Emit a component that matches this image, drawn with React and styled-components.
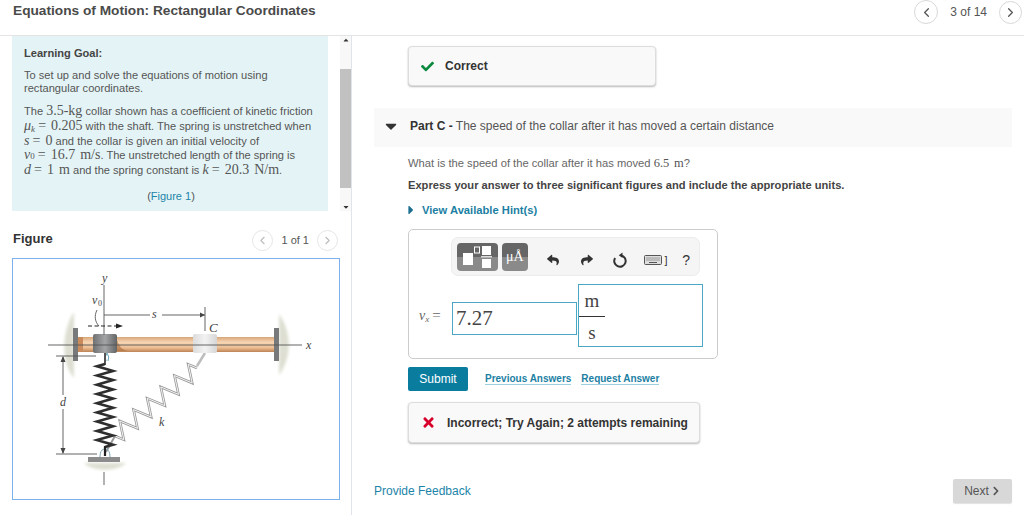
import styled, { createGlobalStyle } from "styled-components";
import { FaCheck, FaTimes, FaReply, FaShare, FaChevronRight, FaCaretDown, FaCaretRight, FaCaretUp } from "react-icons/fa";
import { ChevronLeft, ChevronRight } from "lucide-react";

const GlobalStyle = createGlobalStyle`
  html, body {
    margin: 0;
    padding: 0;
    background: #fff;
    font-family: "Liberation Sans", Arial, sans-serif;
    color: #555;
  }
`;

const Page = styled.div`
  width: 1024px;
  height: 515px;
  overflow: hidden;
  display: flex;
  flex-direction: column;
`;

const Header = styled.header`
  height: 35px;
  border-bottom: 1px solid #e4e4e4;
  display: flex;
  justify-content: space-between;
  padding: 0 2px 0 13px;
`;

const Title = styled.h1`
  margin: 3px 0 0;
  font-size: 13.7px;
  line-height: 16px;
  font-weight: 700;
  color: #4a4a4a;
`;

const Pager = styled.div`
  display: flex;
  align-items: center;
  gap: ${(p) => p.$gap}px;
  height: ${(p) => p.$height}px;
  font-size: ${(p) => p.$size}px;
  color: #555;
`;

const Round = styled.span`
  width: ${(p) => p.$d}px;
  height: ${(p) => p.$d}px;
  box-sizing: border-box;
  border: 1px solid ${(p) => p.$line};
  border-radius: 50%;
  display: flex;
  align-items: center;
  justify-content: center;
  color: ${(p) => p.$color};
`;

const Main = styled.div`
  flex: 1;
  display: flex;
  min-height: 0;
`;

const LeftPane = styled.aside`
  width: 351px;
  border-right: 1px solid #dfe5ea;
  display: flex;
  flex-direction: column;
`;

const GoalRow = styled.div`
  display: flex;
  height: 175px;
  padding-left: 12px;
  gap: 12px;
`;

const GoalBox = styled.div`
  width: 304px;
  background: #e4f4f6;
  padding: 11px 0 0 12px;
  font-size: 11.1px;
  line-height: 13px;
  color: #555;
`;

const GoalHead = styled.div`
  font-weight: 700;
  color: #444;
  margin-bottom: 9px;
`;

const GoalText = styled.p`
  margin: 0 0 9px;
`;

const ProblemText = styled.div`
  margin: 0;
`;

const ProblemLine = styled.div`
  height: 14.8px;
  line-height: 14.8px;
  white-space: nowrap;
`;

const FigureLink = styled.div`
  margin-top: 12px;
  margin-right: 10px;
  text-align: center;
  font-size: 11px;
  color: #555;

  span {
    color: #1c84a8;
  }
`;

const M = styled.span`
  font-family: "Liberation Serif", "Times New Roman", serif;
  font-size: ${(p) => p.$size || 14}px;
  color: #555;
  word-spacing: 1.5px;
  font-style: ${(p) => (p.$italic ? "italic" : "normal")};

  sub {
    font-size: 9px;
    line-height: 0;
    vertical-align: -2px;
  }
`;

const Scrollbar = styled.div`
  width: 11px;
  background: #f8f8f8;
  display: flex;
  flex-direction: column;
  justify-content: space-between;
  align-items: center;
  color: #333;
  font-size: 8px;
`;

const Thumb = styled.div`
  width: 100%;
  height: 119px;
  background: #c1c1c1;
  margin: 5px 0 -5px;
`;

const FigureHead = styled.div`
  height: 47px;
  display: flex;
  align-items: center;
  justify-content: space-between;
  padding: 11px 13px 0 13px;
  box-sizing: border-box;
`;

const FigureTitle = styled.h2`
  margin: 0 0 4px;
  font-size: 13px;
  font-weight: 700;
  color: #333;
`;

const FigureFrame = styled.div`
  margin-left: 12px;
  width: 326px;
  height: 240px;
  border: 1px solid #7fb0ee;
  line-height: 0;
`;

const RightPane = styled.main`
  flex: 1;
  display: flex;
  flex-direction: column;
  padding: 10px 12px 0 22px;
`;

const Feedback = styled.div`
  margin: ${(p) => p.$top}px 0 0 34px;
  width: ${(p) => p.$width}px;
  height: ${(p) => p.$height}px;
  box-sizing: border-box;
  border: 1px solid #ddd;
  border-radius: 4px;
  background: #f9f9f9;
  box-shadow: 0 1px 2px rgba(0, 0, 0, 0.28);
  display: flex;
  align-items: center;
  gap: ${(p) => p.$gap}px;
  padding-left: 12px;
  font-size: 12px;
  font-weight: 700;
  color: #333;
`;

const PartBar = styled.div`
  margin-top: 22px;
  height: 39px;
  box-sizing: border-box;
  background: #f9f9f9;
  display: flex;
  align-items: center;
  font-size: 12px;
  color: #555;
  padding: 0 0 3px 8px;
  gap: 10px;

  svg {
    color: #333;
  }

  b {
    color: #333;
  }
`;

const Question = styled.p`
  margin: 9px 0 0 34px;
  font-size: 11.2px;
  line-height: 14px;
  color: #666;
`;

const Instruction = styled.p`
  margin: 8px 0 0 34px;
  font-size: 11.14px;
  line-height: 14px;
  font-weight: 700;
  color: #444;
`;

const Hint = styled.div`
  margin: 12px 0 0 34px;
  display: flex;
  align-items: center;
  gap: 4px;
  font-size: 11.2px;
  line-height: 13px;
  font-weight: 700;
  color: #1c7fa3;

  svg {
    color: #1c6f90;
    margin: -2px 0 0 -4px;
  }
`;

const AnswerCard = styled.div`
  margin: 12px 0 0 34px;
  width: 310px;
  height: 130px;
  box-sizing: border-box;
  border: 1px solid #ccc;
  border-radius: 5px;
  padding: 7px 0 0 14px;
`;

const Toolbar = styled.div`
  width: 249px;
  height: 39px;
  margin-left: 28px;
  box-sizing: border-box;
  background: #f5f5f5;
  border: 1px solid #ececec;
  border-radius: 7px;
  display: flex;
  align-items: center;
  padding-left: 5px;
  color: #333;
`;

const ToolKey = styled.div`
  width: ${(p) => p.$w}px;
  height: 28px;
  margin-right: 4px;
  border-radius: 4px;
  background: linear-gradient(#666 0 50%, #8a8a8a 50% 100%);
  color: #fff;
  display: flex;
  align-items: center;
  justify-content: center;
  font-family: "Liberation Serif", serif;
  font-size: 14px;
`;

const ToolIcon = styled.span`
  width: ${(p) => p.$w}px;
  margin-top: 6px;
  display: flex;
  justify-content: center;
  align-items: center;
  gap: 2px;
  color: #333;
  font-size: 14px;

  small {
    font-size: 11px;
  }
`;

const AnswerRow = styled.div`
  margin-top: 8px;
  display: flex;
  align-items: flex-start;
  height: 63px;
`;

const Variable = styled.span`
  flex: 0 0 33px;
  margin: 23px 0 0 -4px;
  font-family: "Liberation Serif", serif;
  font-style: italic;
  font-size: 14px;
  line-height: 16px;
  color: #666;

  sub {
    font-size: 9px;
    line-height: 0;
    vertical-align: -2px;
  }

  em {
    font-style: normal;
    font-size: 15px;
    margin-left: 3px;
  }
`;

const ValueBox = styled.div`
  width: 125px;
  height: 33px;
  margin-top: 18px;
  box-sizing: border-box;
  border: 1px solid #4ba8c4;
  padding-left: 3px;
  font-family: "Liberation Serif", serif;
  font-size: 21px;
  line-height: 31px;
  color: #444;
`;

const UnitBox = styled.div`
  width: 125px;
  height: 63px;
  margin-left: 1px;
  box-sizing: border-box;
  border: 1px solid #4ba8c4;
  font-family: "Liberation Serif", serif;
  font-size: 19px;
  color: #444;
`;

const Fraction = styled.div`
  width: 26px;
  text-align: center;
  padding-top: 5px;
  line-height: 21px;

  div + div {
    border-top: 1px solid #333;
    margin-top: 5px;
    padding-top: 5px;
  }
`;

const Actions = styled.div`
  margin: 8px 0 0 34px;
  display: flex;
  align-items: center;
`;

const SubmitButton = styled.button`
  width: 60px;
  height: 24px;
  border: none;
  border-radius: 2px;
  background: #0a7d9f;
  color: #fff;
  font-family: inherit;
  font-size: 12px;
  padding: 0;
  margin-right: 17px;
`;

const TextLink = styled.a`
  font-size: 10px;
  font-weight: 700;
  color: #1c7fa3;
  margin-right: 10px;
  border-bottom: 1px solid #9cd0e0;
  line-height: 11px;
`;

const Footer = styled.footer`
  margin-top: auto;
  height: 36px;
  display: flex;
  justify-content: space-between;
  align-items: flex-start;
`;

const FeedbackLink = styled.a`
  font-size: 12px;
  line-height: 24px;
  color: #1c84a8;
`;

const NextButton = styled.div`
  width: 59px;
  height: 24px;
  background: #d8d8d8;
  border-radius: 2px;
  box-shadow: 0 1px 1px rgba(0, 0, 0, 0.12);
  display: flex;
  align-items: center;
  justify-content: center;
  gap: 2px;
  font-size: 12px;
  color: #555;
`;

// zigzag between two points, used for both springs
const coil = (x1, y1, x2, y2, turns, amp) => {
  const dx = x2 - x1;
  const dy = y2 - y1;
  const len = Math.hypot(dx, dy);
  const nx = -dy / len;
  const ny = dx / len;
  const pts = [[x1, y1]];
  for (let i = 0; i < turns * 2; i++) {
    const t = (i + 0.5) / (turns * 2);
    const side = i % 2 === 0 ? amp : -amp;
    pts.push([x1 + dx * t + nx * side, y1 + dy * t + ny * side]);
  }
  pts.push([x2, y2]);
  return pts.map((p) => p.map((n) => n.toFixed(1)).join(",")).join(" ");
};

function CollarDiagram() {
  const darkSpring = coil(105, 364, 105, 447, 9, 8);
  const lightSpring = coil(115, 436, 197, 368, 6, 8.5);
  const serif = { fontFamily: "Liberation Serif, serif", fontStyle: "italic", fill: "#444" };
  return (
    <svg width="326" height="240" viewBox="13 259 326 240">
      <defs>
        <linearGradient id="rod" x1="0" y1="0" x2="0" y2="1">
          <stop offset="0" stopColor="#d8a678" />
          <stop offset="0.35" stopColor="#f7d6b5" />
          <stop offset="0.7" stopColor="#eebf95" />
          <stop offset="1" stopColor="#bd8455" />
        </linearGradient>
        <linearGradient id="steel" x1="0" y1="0" x2="1" y2="0">
          <stop offset="0" stopColor="#6f7172" />
          <stop offset="0.5" stopColor="#a2a4a5" />
          <stop offset="1" stopColor="#626465" />
        </linearGradient>
        <linearGradient id="ghost" x1="0" y1="0" x2="1" y2="0">
          <stop offset="0" stopColor="#dcdcdc" />
          <stop offset="0.5" stopColor="#f2f2f2" />
          <stop offset="1" stopColor="#d6d6d6" />
        </linearGradient>
        <filter id="soft">
          <feGaussianBlur stdDeviation="0.45" />
        </filter>
        <filter id="softer">
          <feGaussianBlur stdDeviation="1.6" />
        </filter>
      </defs>
      <g filter="url(#softer)" fill="#dedfd2">
        <path d="M74 312 C62 330 60 362 74 378 Z" />
        <path d="M279 314 C292 332 292 358 279 375 Z" />
        <path d="M84 463 H126 C118 472 92 472 84 463 Z" />
      </g>
      <g filter="url(#soft)">
        <rect x="73" y="328" width="5" height="33" fill="#77797a" />
        <rect x="274" y="328" width="5" height="33" fill="#77797a" />
        <rect x="78" y="337" width="196" height="15" fill="url(#rod)" />
        <rect x="78" y="337" width="5" height="15" fill="#c98a5c" />
        <path d="M117 340 C119 346 122 350 128 351 H117 Z" fill="#a86c3e" opacity="0.6" />
        <path d="M107 353 q-3 4 -1 8 M107 353 q3 4 1 8" stroke="#6aa5b8" fill="none" />
        <path d="M205 353 L197 366" stroke="#bdbdbd" strokeWidth="2.5" fill="none" />
        <polyline points={lightSpring} fill="none" stroke="#9a9a9a" strokeWidth="2.6" />
        <polyline points={lightSpring} fill="none" stroke="#f4f4f4" strokeWidth="1" />
        <path d="M115 436 L106 452" stroke="#9a9a9a" strokeWidth="2" fill="none" />
        <line x1="105" y1="353" x2="105" y2="365" stroke="#555" strokeWidth="2" />
        <polyline points={darkSpring} fill="none" stroke="#2e2e2e" strokeWidth="2.6" />
        <line x1="105" y1="446" x2="105" y2="456" stroke="#222" strokeWidth="2.2" />
        <path d="M100 457 q0 -7 4 -8 M110 457 q0 -7 -4 -8" stroke="#7da5b5" fill="none" />
        <rect x="88" y="457" width="32" height="5" fill="#8c8c8c" />
        <rect x="93" y="334" width="24" height="19" rx="2" fill="url(#steel)" />
        <rect x="193" y="334" width="24" height="19" rx="2" fill="url(#ghost)" />
        <g stroke="#555" strokeWidth="0.9" fill="none">
          <line x1="48" y1="345" x2="302" y2="345" />
          <line x1="104" y1="285" x2="104" y2="335" />
          <line x1="104" y1="472" x2="104" y2="485" />
          <line x1="205" y1="307" x2="205" y2="331" />
          <line x1="104" y1="315" x2="150" y2="315" />
          <line x1="162" y1="315" x2="205" y2="315" />
          <line x1="56" y1="356" x2="96" y2="356" />
          <line x1="56" y1="454" x2="97" y2="454" />
          <line x1="63" y1="357" x2="63" y2="395" />
          <line x1="63" y1="409" x2="63" y2="453" />
          <path d="M97 310 C94 316 95 322 99 326" />
          <line x1="88" y1="326" x2="118" y2="326" stroke="#222" strokeWidth="1.2" strokeDasharray="4 2.5" />
        </g>
        <path d="M123 326 L116 323.5 V328.5 Z" fill="#222" />
        <path d="M205 315 L200 312.5 V317.5 Z" fill="#444" />
        <path d="M63 356 L60.5 362 H65.5 Z" fill="#444" />
        <path d="M63 454 L60.5 448 H65.5 Z" fill="#444" />
      </g>
      <g fontSize="12" style={serif}>
        <text x="102" y="282">y</text>
        <text x="92" y="304">v</text>
        <text x="98" y="306" fontSize="8" fontStyle="normal">0</text>
        <text x="152" y="318">s</text>
        <text x="209" y="332" fontSize="13">C</text>
        <text x="306" y="349">x</text>
        <text x="60" y="406">d</text>
        <text x="159" y="426">k</text>
      </g>
    </svg>
  );
}

function KeyboardIcon() {
  return (
    <svg width="18" height="10" viewBox="0 0 18 10">
      <rect x="0.5" y="0.5" width="17" height="9" rx="1" fill="#ddd" stroke="#555" />
      <path d="M2.5 3 H15.5 M2.5 5 H15.5" stroke="#555" strokeDasharray="1 1" />
      <path d="M5 7.5 H13" stroke="#555" />
    </svg>
  );
}

function ResetIcon() {
  return (
    <svg width="16" height="16" viewBox="0 0 16 16">
      <path d="M3.1 6 A5.7 5.7 0 1 0 9 3.4" fill="none" stroke="#333" strokeWidth="2" />
      <path d="M6.8 3.3 L10.5 0.5 V6 Z" fill="#333" />
    </svg>
  );
}

function TemplateGlyph() {
  return (
    <svg width="41" height="28" viewBox="0 0 41 28">
      <rect x="6" y="10" width="10" height="12" fill="#fff" />
      <rect x="17.5" y="4" width="5" height="6" fill="none" stroke="#fff" />
      <rect x="25" y="3" width="9" height="9" fill="#fff" />
      <rect x="24" y="13" width="11" height="1.5" fill="#ddd" />
      <rect x="25" y="16" width="9" height="9" fill="#fff" />
    </svg>
  );
}

export default function App() {
  return (
    <Page>
      <GlobalStyle />
      <Header>
        <Title>Equations of Motion: Rectangular Coordinates</Title>
        <Pager $gap={12} $height={24} $size={12}>
          <Round $d={24} $line="#d8d8d8" $color="#555"><ChevronLeft size={15} /></Round>
          <span>3 of 14</span>
          <Round $d={23} $line="#d8d8d8" $color="#555"><ChevronRight size={15} /></Round>
        </Pager>
      </Header>
      <Main>
        <LeftPane>
          <GoalRow>
            <GoalBox>
              <GoalHead>Learning Goal:</GoalHead>
              <GoalText>
                To set up and solve the equations of motion using<br />
                rectangular coordinates.
              </GoalText>
              <ProblemText>
                <ProblemLine>The <M>3.5-kg</M> collar shown has a coefficient of kinetic friction</ProblemLine>
                <ProblemLine><M $italic>μ<sub>k</sub></M> <M>= 0.205</M> with the shaft. The spring is unstretched when</ProblemLine>
                <ProblemLine><M $italic>s</M> <M>= 0</M> and the collar is given an initial velocity of</ProblemLine>
                <ProblemLine><M $italic>v</M><M $size={9}>0</M> <M>= 16.7 m/s</M>. The unstretched length of the spring is</ProblemLine>
                <ProblemLine><M $italic>d</M> <M>= 1 m</M> and the spring constant is <M $italic>k</M> <M>= 20.3 N/m</M>.</ProblemLine>
              </ProblemText>
              <FigureLink>(<span>Figure 1</span>)</FigureLink>
            </GoalBox>
            <Scrollbar>
              <FaCaretUp />
              <Thumb />
              <FaCaretDown />
            </Scrollbar>
          </GoalRow>
          <FigureHead>
            <FigureTitle>Figure</FigureTitle>
            <Pager $gap={8} $height={21} $size={11}>
              <Round $d={21} $line="#e6e6e6" $color="#bbb"><ChevronLeft size={13} /></Round>
              <span>1 of 1</span>
              <Round $d={21} $line="#e6e6e6" $color="#bbb"><ChevronRight size={13} /></Round>
            </Pager>
          </FigureHead>
          <FigureFrame>
            <CollarDiagram />
          </FigureFrame>
        </LeftPane>
        <RightPane>
          <Feedback $top={0} $width={248} $height={40} $gap={11}>
            <FaCheck color="#0b8a3e" size={13} />
            Correct
          </Feedback>
          <PartBar>
            <FaCaretDown size={18} />
            <span><b>Part C -</b> The speed of the collar after it has moved a certain distance</span>
          </PartBar>
          <Question>What is the speed of the collar after it has moved <M $size={12.5}>6.5 m</M>?</Question>
          <Instruction>Express your answer to three significant figures and include the appropriate units.</Instruction>
          <Hint><FaCaretRight size={14} />View Available Hint(s)</Hint>
          <AnswerCard>
            <Toolbar>
              <ToolKey $w={41}><TemplateGlyph /></ToolKey>
              <ToolKey $w={26}>μÅ</ToolKey>
              <ToolIcon $w={42}><FaReply size={12} /></ToolIcon>
              <ToolIcon $w={28}><FaShare size={12} /></ToolIcon>
              <ToolIcon $w={38}><ResetIcon /></ToolIcon>
              <ToolIcon $w={35}><KeyboardIcon /><small>]</small></ToolIcon>
              <ToolIcon $w={26}>?</ToolIcon>
            </Toolbar>
            <AnswerRow>
              <Variable>v<sub>x</sub><em>=</em></Variable>
              <ValueBox>7.27</ValueBox>
              <UnitBox>
                <Fraction>
                  <div>m</div>
                  <div>s</div>
                </Fraction>
              </UnitBox>
            </AnswerRow>
          </AnswerCard>
          <Actions>
            <SubmitButton>Submit</SubmitButton>
            <TextLink>Previous Answers</TextLink>
            <TextLink>Request Answer</TextLink>
          </Actions>
          <Feedback $top={11} $width={292} $height={41} $gap={11}>
            <FaTimes color="#d8002a" size={15} />
            Incorrect; Try Again; 2 attempts remaining
          </Feedback>
          <Footer>
            <FeedbackLink>Provide Feedback</FeedbackLink>
            <NextButton>Next <FaChevronRight size={10} /></NextButton>
          </Footer>
        </RightPane>
      </Main>
    </Page>
  );
}
